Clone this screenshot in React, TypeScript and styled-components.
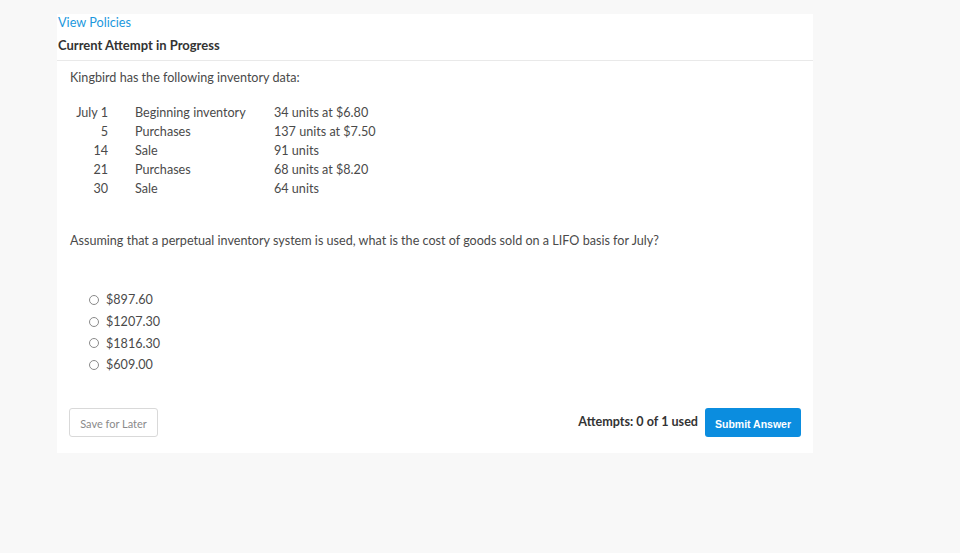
import React from "react";
import styled, { createGlobalStyle } from "styled-components";

const GlobalStyle = createGlobalStyle`
  html, body {
    margin: 0;
    padding: 0;
    background: #f8f8f8;
  }
  body {
    font-family: Lato, "Open Sans", sans-serif;
    color: #4a4a4a;
    -webkit-font-smoothing: antialiased;
  }
`;

const Page = styled.div`
  min-height: 553px;
  padding-top: 14px;
  box-sizing: border-box;
`;

const Panel = styled.div`
  margin-left: 57px;
  width: 756px;
  background: #ffffff;
  box-sizing: border-box;
`;

const Header = styled.div`
  padding: 0 1px 7px;
  border-bottom: 1px solid #e9e9e9;
`;

const PolicyLink = styled.a`
  display: block;
  font-size: 12.7px;
  line-height: 16px;
  color: #1c98dd;
  text-decoration: none;
  cursor: pointer;
`;

const Title = styled.div`
  margin-top: 7px;
  font-size: 13px;
  line-height: 16px;
  font-weight: 700;
  color: #333;
`;

const Body = styled.div`
  padding: 9px 12px 16px 13px;
`;

const Intro = styled.p`
  margin: 0;
  font-size: 12.6px;
  line-height: 16px;
  color: #4a4a4a;
`;

const DataTable = styled.div`
  margin-top: 17px;
  display: grid;
  grid-template-columns: 38px 112px auto;
  column-gap: 27px;
  font-size: 12.6px;
  line-height: 19px;
  color: #4a4a4a;
`;

const DateCell = styled.div`
  text-align: right;
`;

const Question = styled.p`
  margin: 35px 0 0;
  font-size: 12.6px;
  line-height: 16px;
  color: #4a4a4a;
`;

const Options = styled.div`
  margin-top: 40px;
  padding-left: 19px;
  display: flex;
  flex-direction: column;
`;

const Option = styled.label`
  display: flex;
  align-items: center;
  gap: 7px;
  height: 21.7px;
  font-size: 12.6px;
  color: #4a4a4a;
  cursor: pointer;
`;

const Radio = styled.span`
  width: 8px;
  height: 8px;
  border: 1px solid #8a8a8a;
  border-radius: 50%;
  flex-shrink: 0;
`;

const Footer = styled.div`
  margin-top: 32px;
  display: flex;
  align-items: center;
  justify-content: space-between;
`;

const SaveButton = styled.button`
  width: 89px;
  height: 29px;
  margin-left: -1px;
  background: #ffffff;
  border: 1px solid #d9d9d9;
  border-radius: 3px;
  font-family: Lato, sans-serif;
  font-size: 11px;
  color: #8a8a8a;
  cursor: pointer;
  padding-top: 4px;
`;

const SubmitGroup = styled.div`
  display: flex;
  align-items: center;
  gap: 7px;
`;

const Attempts = styled.span`
  font-size: 12.6px;
  font-weight: 700;
  color: #333;
  margin-top: -2px;
`;

const SubmitButton = styled.button`
  width: 96px;
  height: 29px;
  background: #0b8ddf;
  border: none;
  border-radius: 3px;
  font-family: "Liberation Sans", Arial, sans-serif;
  font-size: 10.5px;
  font-weight: 700;
  color: #ffffff;
  cursor: pointer;
  padding-top: 4px;
`;

const rows = [
  ["July 1", "Beginning inventory", "34 units at $6.80"],
  ["5", "Purchases", "137 units at $7.50"],
  ["14", "Sale", "91 units"],
  ["21", "Purchases", "68 units at $8.20"],
  ["30", "Sale", "64 units"],
];

const answers = ["$897.60", "$1207.30", "$1816.30", "$609.00"];

export default function App() {
  return (
    <Page>
      <GlobalStyle />
      <Panel>
        <Header>
          <PolicyLink>View Policies</PolicyLink>
          <Title>Current Attempt in Progress</Title>
        </Header>
        <Body>
          <Intro>Kingbird has the following inventory data:</Intro>
          <DataTable>
            {rows.map(([d, what, qty]) => (
              <React.Fragment key={d}>
                <DateCell>{d}</DateCell>
                <div>{what}</div>
                <div>{qty}</div>
              </React.Fragment>
            ))}
          </DataTable>
          <Question>
            Assuming that a perpetual inventory system is used, what is the cost of goods sold on a LIFO basis for July?
          </Question>
          <Options>
            {answers.map((a) => (
              <Option key={a}>
                <Radio />
                {a}
              </Option>
            ))}
          </Options>
          <Footer>
            <SaveButton>Save for Later</SaveButton>
            <SubmitGroup>
              <Attempts>Attempts: 0 of 1 used</Attempts>
              <SubmitButton>Submit Answer</SubmitButton>
            </SubmitGroup>
          </Footer>
        </Body>
      </Panel>
    </Page>
  );
}
